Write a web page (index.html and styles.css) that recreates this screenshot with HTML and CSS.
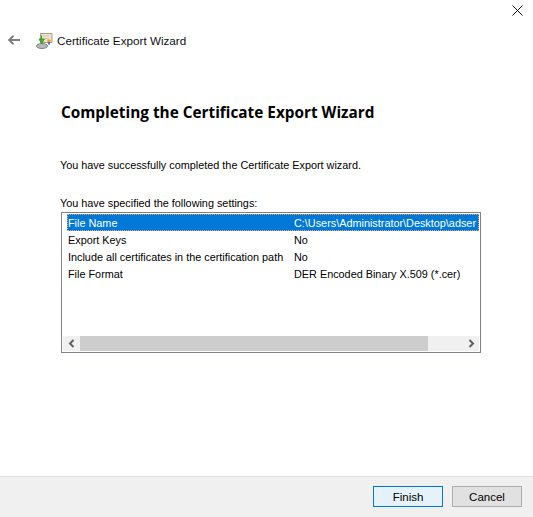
FILE: index.html
```html
<!DOCTYPE html>
<html lang="en">
<head>
  <meta charset="UTF-8">
  <title>Certificate Export Wizard</title>
  <link rel="stylesheet" href="styles.css">
</head>
<body>

<div class="titlebar">
  <svg class="close" width="11" height="11" viewBox="0 0 11 11"><path d="M.5.5l10 10M10.5.5l-10 10" stroke="#111" fill="none"/></svg>
</div>

<header class="nav">
  <svg class="back" width="12" height="10" viewBox="0 0 12 10"><path d="M5.5 .7L1.2 5l4.300 4.300M1.500 5H12" stroke="#808080" stroke-width="2" fill="none"/></svg>
  <svg class="cert" width="17" height="17" viewBox="0 0 17 17">
    <path d="M4.500 1.500h11.500v9h-11.500z" fill="#eee6cf" stroke="#a89e86"/>
    <path d="M6.500 4h7M9 6.500h4" stroke="#cfc2a4"/>
    <circle cx="13" cy="9" r="1.800" fill="#e8a030"/>
    <path d="M12 10h2v2.500h-2z" fill="#3f78c8"/>
    <ellipse cx="6" cy="14" rx="5.500" ry="2.500" fill="#b8bcb8" stroke="#666c66" stroke-width=".8"/>
    <path d="M5.500 3.500v4.500M3 7h5.500L5.500 11.500z" fill="#4fae2e" stroke="#3f9a24"/>
  </svg>
  <span class="nav-title">Certificate Export Wizard</span>
</header>

<main class="content">
  <h1>Completing the Certificate Export Wizard</h1>
  <p class="done">You have successfully completed the Certificate Export wizard.</p>
  <p class="specified">You have specified the following settings:</p>

  <div class="listbox">
    <div class="rows">
      <div class="row selected"><span>File Name</span><span class="value">C:\Users\Administrator\Desktop\adser</span></div>
      <div class="row"><span>Export Keys</span><span class="value">No</span></div>
      <div class="row"><span>Include all certificates in the certification path</span><span class="value">No</span></div>
      <div class="row"><span>File Format</span><span class="value">DER Encoded Binary X.509 (*.cer)</span></div>
    </div>
    <div class="scrollbar">
      <div class="arrow">
        <svg width="7" height="9" viewBox="0 0 7 9"><path d="M5.5 1L2 4.500 5.500 8" stroke="#606060" stroke-width="2" fill="none"/></svg>
      </div>
      <div class="thumb"></div>
      <div class="track">
        <svg width="7" height="9" viewBox="0 0 7 9"><path d="M1.500 1L5 4.500 1.500 8" stroke="#606060" stroke-width="2" fill="none"/></svg>
      </div>
    </div>
  </div>
</main>

<footer class="footer">
  <button class="btn default">Finish</button>
  <button class="btn">Cancel</button>
</footer>

</body>
</html>
```

FILE: styles.css
```css
* { box-sizing: border-box; margin: 0; padding: 0; }
body {
  width: 533px;
  height: 517px;
  overflow: hidden;
  background: #fff;
  color: #000;
  font-family: "Liberation Sans", Arial, sans-serif;
  font-size: 10.85px;
  display: flex;
  flex-direction: column;
}

/* title bar + nav */
.titlebar {
  height: 24px;
  display: flex;
  justify-content: flex-end;
  align-items: flex-start;
  padding: 5px 10px 0 0;
}
.nav {
  height: 32px;
  display: flex;
  align-items: center;
  padding-left: 8px;
}
.cert { margin-left: 16px; }
.nav-title { margin-left: 4px; font-size: 11.7px; color: #111; }

/* main */
.content { flex: 1; padding: 0 52px 0 60px; }
h1 {
  font-family: "Open Sans", sans-serif;
  font-size: 15.35px;
  font-weight: 700;
  line-height: 20px;
  margin: 46px 0 0 1px;
}
.done { margin-top: 35px; line-height: 16px; }
.specified { margin-top: 22px; line-height: 16px; }

/* list */
.listbox {
  margin: 1px 0 0 1px;
  width: 420px;
  height: 141px;
  border: 1px solid #82828c;
  padding: 1px;
  display: flex;
  flex-direction: column;
  justify-content: space-between;
}
.rows { padding-left: 4px; }
.row {
  height: 17px;
  display: flex;
  align-items: center;
  padding-left: 1px;
  white-space: nowrap;
  overflow: hidden;
}
.row span:first-child { width: 226px; flex: none; }
.selected {
  background: #0078d7;
  color: #fff;
  outline: 1px dotted #f0a060;
  outline-offset: -1px;
}

/* scrollbar */
.scrollbar { height: 15px; display: flex; background: #f0f0f0; }
.arrow { width: 17px; display: flex; align-items: center; justify-content: center; }
.thumb { width: 348px; background: #cdcdcd; }
.track { flex: 1; display: flex; align-items: center; justify-content: flex-end; padding-right: 4px; }

/* footer */
.footer {
  height: 41px;
  background: #f0f0f0;
  border-top: 1px solid #dfdfdf;
  display: flex;
  justify-content: flex-end;
  align-items: flex-start;
  gap: 9px;
  padding: 9px 11px 0 0;
}
.btn {
  width: 70px;
  height: 21px;
  font: inherit;
  font-size: 11.5px;
  background: #e1e1e1;
  border: 1px solid #adadad;
  color: #000;
}
.default { background: #e5f1fb; border-color: #0078d7; }
```
